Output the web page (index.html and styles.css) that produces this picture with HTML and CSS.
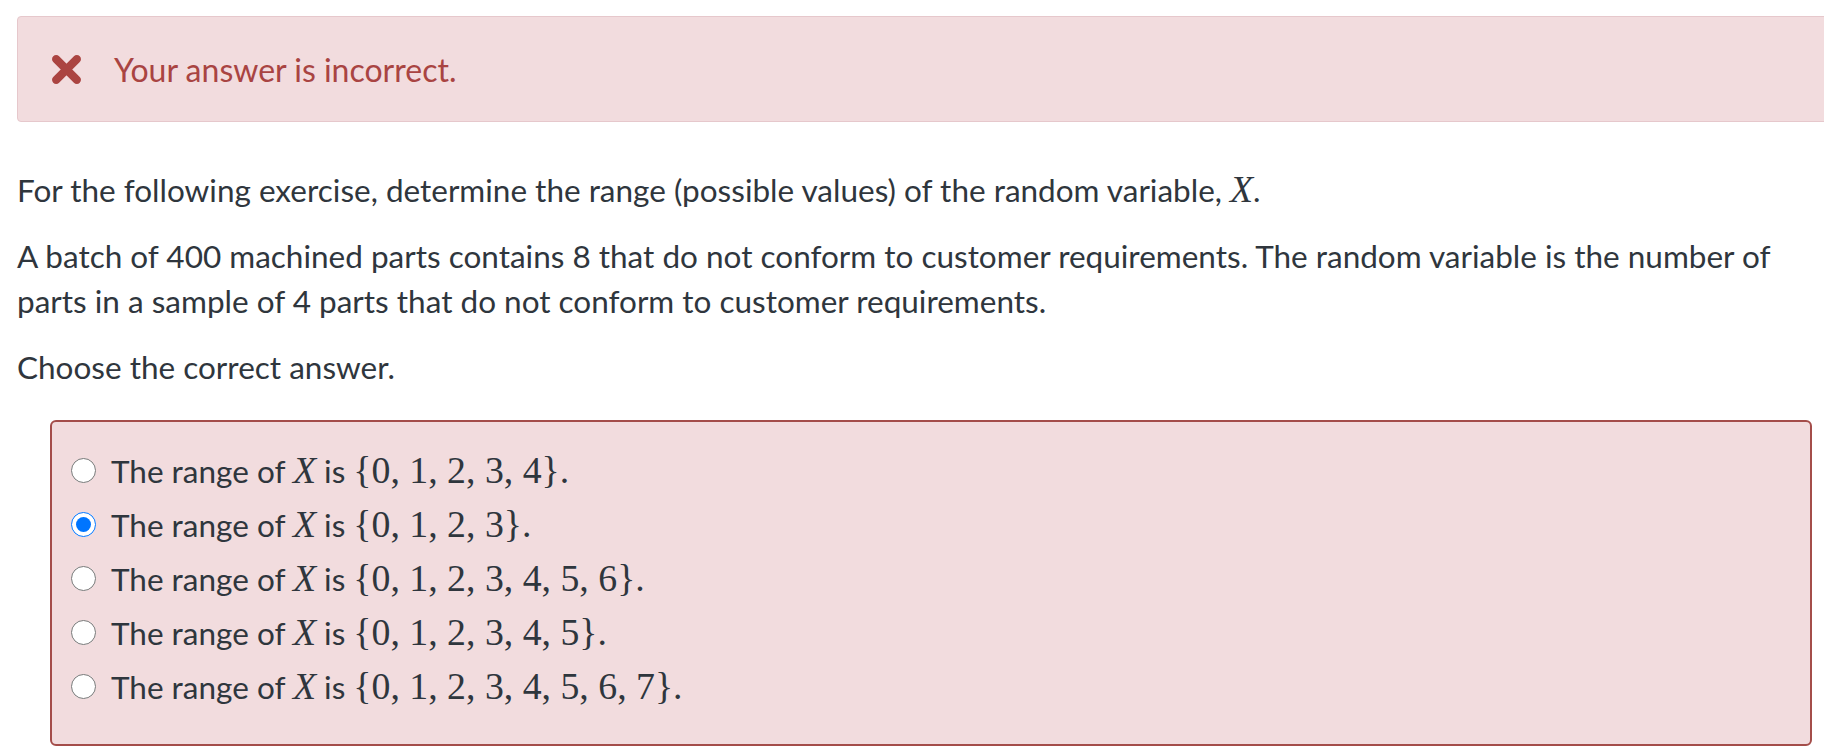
FILE: index.html
```html
<!DOCTYPE html>
<html>
<head>
<meta charset="utf-8">
<link rel="stylesheet" href="styles.css">
</head>
<body>
<div class="page">
  <div class="alert">
    <svg class="alert-icon" viewBox="0 0 30 30" width="31" height="31" aria-hidden="true">
      <path d="M5 5 L25 25 M25 5 L5 25" stroke="#ab4441" stroke-width="8" stroke-linecap="round" fill="none"/>
    </svg>
    <span class="alert-text">Your answer is incorrect.</span>
  </div>

  <p class="para">For the following exercise, determine the range (possible values) of the random variable, <span class="mvar">X</span>.</p>
  <p class="para">A batch of 400 machined parts contains 8 that do not conform to customer requirements. The random variable is the number of parts in a sample of 4 parts that do not conform to customer requirements.</p>
  <p class="para">Choose the correct answer.</p>

  <div class="options">
    <label class="option"><input type="radio" name="a" class="radio"><span>The range of <span class="mvar">X</span> is <span class="math">{0, 1, 2, 3, 4}.</span></span></label>
    <label class="option"><input type="radio" name="a" class="radio" checked><span>The range of <span class="mvar">X</span> is <span class="math">{0, 1, 2, 3}.</span></span></label>
    <label class="option"><input type="radio" name="a" class="radio"><span>The range of <span class="mvar">X</span> is <span class="math">{0, 1, 2, 3, 4, 5, 6}.</span></span></label>
    <label class="option"><input type="radio" name="a" class="radio"><span>The range of <span class="mvar">X</span> is <span class="math">{0, 1, 2, 3, 4, 5}.</span></span></label>
    <label class="option"><input type="radio" name="a" class="radio"><span>The range of <span class="mvar">X</span> is <span class="math">{0, 1, 2, 3, 4, 5, 6, 7}.</span></span></label>
  </div>
</div>
</body>
</html>
```
FILE: styles.css
```css
html, body {
  margin: 0;
  padding: 0;
  background: #ffffff;
  overflow: hidden;
}
body {
  font-family: Lato, "Noto Sans", sans-serif;
  font-size: 31.5px;
  color: #2f363d;
}
.page {
  width: 1828px;
  padding: 16px 0 0 17px;
}
.alert {
  box-sizing: border-box;
  height: 106px;
  background: #f2dcde;
  border: 1px solid #e6c8cc;
  border-radius: 4px;
  color: #a94442;
  display: flex;
  align-items: center;
  padding-left: 33px;
}
.alert-icon {
  flex: none;
  margin-right: 32px;
  margin-top: 1px;
}
.alert-text {
  font-size: 32px;
  line-height: 45px;
}
.para {
  margin: 0 0 21px 0;
  line-height: 45px;
}
.alert + .para {
  margin-top: 45px;
}
.mvar {
  font-family: "Liberation Serif", "Times New Roman", serif;
  font-style: italic;
  font-size: 1.2em;
}
.math {
  font-family: "Liberation Serif", "Times New Roman", serif;
  font-size: 1.2em;
}
.options {
  margin: 30px 33px 0 33px;
  background: #f2dcde;
  border: 2px solid #a44d4a;
  border-radius: 6px;
  padding: 21px 19px 31px 19px;
}
.option {
  display: flex;
  align-items: center;
  height: 54px;
}
.radio {
  flex: none;
  width: 25px;
  height: 25px;
  margin: 0 15px 0 0;
}
```
